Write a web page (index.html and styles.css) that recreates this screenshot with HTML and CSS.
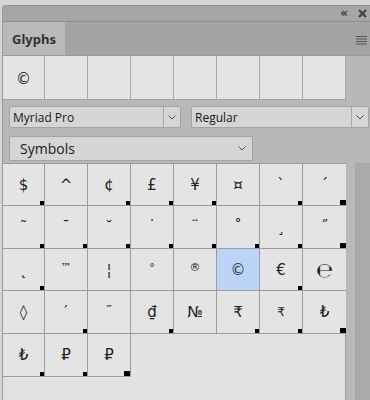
FILE: index.html
```html
<!DOCTYPE html>
<html>
<head>
<meta charset="utf-8">
<link rel="stylesheet" href="styles.css">
</head>
<body>
<div class="top-strip"></div>
<div class="panel">
  <div class="titlebar">
    <span class="collapse">&laquo;</span>
    <svg class="close" width="9" height="9" viewBox="0 0 9 9"><path d="M1 1 L8 8 M8 1 L1 8" stroke="#3c3c3c" stroke-width="2"/></svg>
  </div>
  <div class="tabbar">
    <div class="tab">Glyphs</div>
    <svg class="menu" width="11" height="10" viewBox="0 0 11 10"><path d="M0 1.5H11M0 4H11M0 6.5H11M0 9H11" stroke="#555" stroke-width="1"/></svg>
  </div>
  <div class="recent">
    <div class="rcell">©</div><div class="rcell"></div><div class="rcell"></div><div class="rcell"></div>
    <div class="rcell"></div><div class="rcell"></div><div class="rcell"></div><div class="rcell"></div>
  </div>
  <div class="controls">
    <div class="row">
      <div class="select font-select"><span class="label">Myriad Pro</span><span class="chev-box"><svg width="8" height="5" viewBox="0 0 8 5"><path d="M0.5 0.5L4 4L7.5 0.5" fill="none" stroke="#555" stroke-width="1"/></svg></span></div>
      <div class="select style-select"><span class="label">Regular</span><span class="chev-box"><svg width="8" height="5" viewBox="0 0 8 5"><path d="M0.5 0.5L4 4L7.5 0.5" fill="none" stroke="#555" stroke-width="1"/></svg></span></div>
    </div>
    <div class="select set-select"><span class="label">Symbols</span><span class="chev"><svg width="8" height="5" viewBox="0 0 8 5"><path d="M0.5 0.5L4 4L7.5 0.5" fill="none" stroke="#555" stroke-width="1"/></svg></span></div>
  </div>
  <div class="glyph-area">
    <div class="grid">
      <div class="g alt">$</div><div class="g">^</div><div class="g alt">¢</div><div class="g alt">£</div>
      <div class="g alt">¥</div><div class="g">¤</div><div class="g alt">`</div><div class="g alt wide">´</div>

      <div class="g alt">˜</div><div class="g alt">¯</div><div class="g alt">˘</div><div class="g alt">˙</div>
      <div class="g alt">¨</div><div class="g alt">˚</div><div class="g alt">¸</div><div class="g alt wide">˝</div>

      <div class="g alt">˛</div><div class="g small">™</div><div class="g">¦</div><div class="g small">°</div>
      <div class="g small">®</div><div class="g sel">©</div><div class="g alt">€</div><div class="g big">℮</div>

      <div class="g">◊</div><div class="g alt">′</div><div class="g small">‴</div><div class="g alt">₫</div>
      <div class="g">№</div><div class="g alt">₹</div><div class="g alt small2">₹</div><div class="g alt wide">₺</div>

      <div class="g alt">₺</div><div class="g alt">₽</div><div class="g alt wide">₽</div>
    </div>
    <div class="scroll-light"></div>
    <div class="scroll-track"></div>
  </div>
</div>
</body>
</html>
```

FILE: styles.css
```css
* { box-sizing: border-box; }
html, body { margin: 0; padding: 0; }
body {
  width: 370px;
  height: 400px;
  overflow: hidden;
  background: #d6d6d6;
  font-family: "Open Sans", "Noto Sans", sans-serif;
  color: #1e1e1e;
}
.top-strip { height: 5px; background: #d6d6d6; }
.panel {
  margin-left: 2px;
  width: 368px;
  height: 395px;
  display: flex;
  flex-direction: column;
  border-top-left-radius: 4px;
  overflow: hidden;
  background: #b8b8b8;
  border-left: 1px solid #9a9a9a;
}
.titlebar {
  height: 17px;
  flex: none;
  background: #a6a6a6;
  border-top: 1px solid #969696;
  border-bottom: 1px solid #8e8e8e;
  display: flex;
  align-items: center;
  justify-content: flex-end;
  padding-right: 3px;
  gap: 11px;
}
.collapse {
  font-size: 12px;
  font-weight: bold;
  color: #3c3c3c;
  line-height: 12px;
  font-family: "DejaVu Sans", sans-serif;
  letter-spacing: -1px;
  margin-top: -2px;
}
.close { display: block; }
.tabbar {
  height: 34px;
  flex: none;
  background: #a4a4a4;
  border-bottom: 1px solid #999;
  display: flex;
  align-items: stretch;
  justify-content: space-between;
}
.tab {
  width: 62px;
  background: #b9b9b9;
  font-weight: bold;
  font-size: 13px;
  color: #333;
  display: flex;
  align-items: center;
  justify-content: center;
  padding-top: 1px;
  font-family: "Noto Sans", sans-serif;
}
.menu { align-self: center; margin-right: 3px; margin-top: 2px; }
.recent {
  height: 43px;
  flex: none;
  display: grid;
  grid-template-columns: 42px repeat(7, 43px);
  grid-auto-rows: 43px;
  width: 343px;
  border-right: 1px solid #a3a3a3;
  background: #e4e4e4;
  border-bottom: 1px solid #a3a3a3;
  height: 44px;
}
.rcell {
  border-right: 1px solid #a6a6a6;
  display: flex;
  align-items: center;
  justify-content: center;
  font-family: "DejaVu Sans", sans-serif;
  font-size: 15px;
  color: #222;
  padding-top: 2px;
}
.rcell:last-child { border-right: none; }
.controls {
  flex: none;
  padding: 6px 1px 2px 6px;
  display: flex;
  flex-direction: column;
  gap: 8px;
}
.row { display: flex; gap: 10px; }
.select {
  display: flex;
  align-items: center;
  background: #d5d5d5;
  border: 1px solid #a4a4a4;
  border-radius: 2px;
  font-size: 12px;
  color: #1a1a1a;
}
.font-select { width: 172px; height: 22px; }
.style-select { width: 178px; height: 22px; }
.label { flex: 1; padding-left: 3px; white-space: nowrap; }
.chev-box {
  width: 17px;
  align-self: stretch;
  border-left: 1px solid #a9a9a9;
  display: flex;
  align-items: center;
  justify-content: center;
}
.chev-box svg, .chev svg { display: block; }
.set-select { width: 244px; height: 25px; font-size: 14px; }
.set-select .label { padding-left: 10px; }
.chev { margin-right: 6px; }
.glyph-area {
  flex: 1;
  display: flex;
  background: #e2e2e2;
}
.grid {
  width: 343px;
  display: grid;
  grid-template-columns: 42px repeat(7, 43px);
  grid-template-rows: 42px 43px 42px 43px 43px;
  align-content: start;
  border-top: 1px solid #9c9c9c;
  border-right: 1px solid #9c9c9c;
  background: #e2e2e2;
}
.g {
  position: relative;
  border-right: 1px solid #9c9c9c;
  border-bottom: 1px solid #9c9c9c;
  background: #e4e4e4;
  display: flex;
  align-items: center;
  justify-content: center;
  font-family: "DejaVu Sans", "Noto Sans", sans-serif;
  font-size: 15px;
  color: #1e1e1e;
}
.g:nth-child(8n) { border-right: none; }
.g.small { font-size: 11px; align-items: flex-start; padding-top: 12px; }
.g.small2 { font-size: 12px; }
.g.big { font-size: 20px; }
.g.sel { background: #bcd4f8; color: #333; }
.g.alt::after {
  content: "";
  position: absolute;
  right: 0;
  bottom: 0;
  width: 4px;
  height: 4px;
  background: #000;
}
.g.alt.wide::after { width: 6px; height: 5px; }
.scroll-light { width: 9px; background: #b9b9b9; }
.scroll-track { flex: 1; background: #aaaaaa; }
```
